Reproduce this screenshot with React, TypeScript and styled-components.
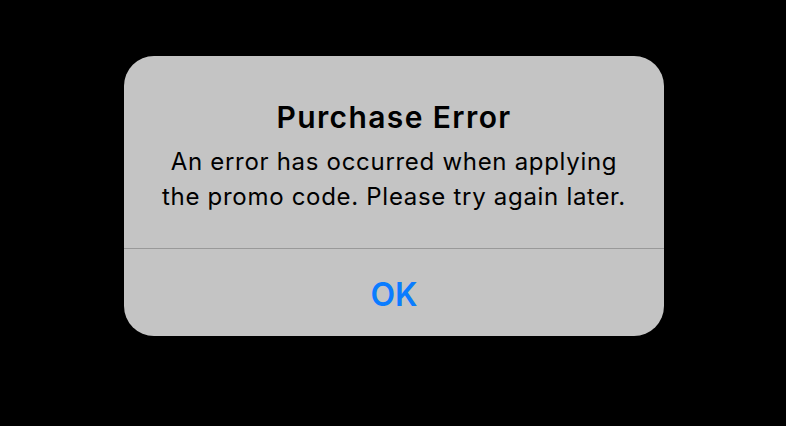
import styled, { createGlobalStyle } from "styled-components";

const GlobalStyle = createGlobalStyle`
  html, body {
    margin: 0;
    padding: 0;
    background: #000;
    font-family: Inter, "Liberation Sans", sans-serif;
  }
`;

const Screen = styled.div`
  width: 786px;
  height: 426px;
  background: #000;
  display: flex;
  justify-content: center;
  align-items: flex-start;
  padding: 56px 0 0 2px;
  box-sizing: border-box;
`;

const Alert = styled.div`
  width: 540px;
  height: 280px;
  background: #c4c4c4;
  border-radius: 30px;
  display: flex;
  flex-direction: column;
  overflow: hidden;
`;

const Body = styled.div`
  flex: 1;
  display: flex;
  flex-direction: column;
  align-items: center;
  padding: 41px 12px 0;
  text-align: center;
  border-bottom: 1px solid #999;
`;

const Title = styled.h2`
  margin: 0;
  font-size: 30px;
  font-weight: 600;
  line-height: 40px;
  color: #000;
  letter-spacing: 1.4px;
`;

const Message = styled.p`
  margin: 7px 0 0;
  font-size: 24px;
  line-height: 35px;
  color: #000;
  letter-spacing: 0.7px;
`;

const Action = styled.button`
  height: 87px;
  padding: 4px 0 0;
  border: none;
  background: transparent;
  font-family: inherit;
  font-size: 32px;
  font-weight: 600;
  line-height: 1;
  color: #0a7cff;
  cursor: pointer;
`;

export default function App() {
  return (
    <>
      <GlobalStyle />
      <Screen>
        <Alert>
          <Body>
            <Title>Purchase Error</Title>
            <Message>
              An error has occurred when applying
              <br />
              the promo code. Please try again later.
            </Message>
          </Body>
          <Action>OK</Action>
        </Alert>
      </Screen>
    </>
  );
}
